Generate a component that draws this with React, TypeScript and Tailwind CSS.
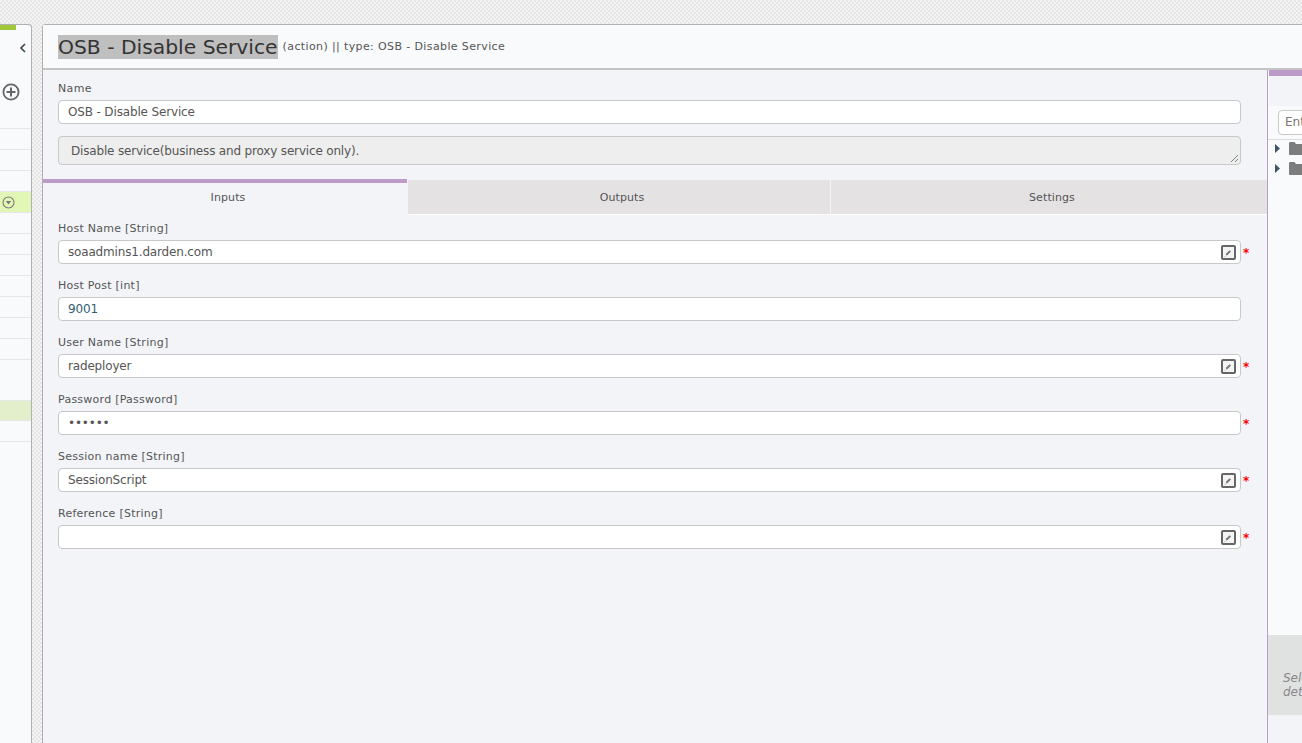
import React from "react";

const sideRows = [
  "h-[21px]",
  "h-[21px]",
  "h-[21px]",
  "h-[21px] bg-[#e2f7b5]",
  "h-[21px]",
  "h-[21px]",
  "h-[21px]",
  "h-[21px]",
  "h-[21px]",
  "h-[21px]",
  "h-[21px]",
  "h-[41px]",
  "h-[20px] bg-[#e3efca]",
  "h-[21px]",
  "h-[21px]",
];

const fields = [
  { label: "Host Name [String]", value: "soaadmins1.darden.com", edit: true, required: true },
  { label: "Host Post [int]", value: "9001", edit: false, required: false, tone: "text-[#2f5d73]" },
  { label: "User Name [String]", value: "radeployer", edit: true, required: true },
  { label: "Password [Password]", value: "••••••", edit: false, required: true },
  { label: "Session name [String]", value: "SessionScript", edit: true, required: true },
  { label: "Reference [String]", value: "", edit: true, required: true },
];

const EditIcon = () => (
  <svg width="15" height="15" viewBox="0 0 15 15" className="absolute right-[5px] top-[5px]">
    <rect x="1" y="1" width="13" height="13" rx="1" fill="#f4f4f4" stroke="#666" strokeWidth="2" />
    <path d="M5.2 8.6 8.6 5.2l1.4 1.4-3.4 3.4-1.8.4z" fill="#777" />
    <path d="M3.5 11.5h1" stroke="#bbb" strokeWidth="1" />
  </svg>
);

const Field = ({ label, value, edit, required, tone }: { label: string; value: string; edit: boolean; required: boolean; tone?: string }) => (
  <div className="mb-[14px]">
    <div className="h-[19px] text-[11px] leading-[16px] tracking-[0.25px] text-[#555]">{label}</div>
    <div className="relative w-[1183px]">
      <div className={`h-[24px] rounded-[4px] border border-[#c8c8c8] bg-white pl-[9px] text-[12px] leading-[23px] tracking-[-0.17px] ${tone ?? "text-[#555]"}`}>
        {value}
      </div>
      {edit && <EditIcon />}
      {required && <span className="absolute left-[1185px] top-[5px] text-[12px] leading-[16px] font-bold text-[#f00]">*</span>}
    </div>
  </div>
);

const Folder = () => (
  <svg width="15" height="15" viewBox="0 0 15 15">
    <path d="M0 2a1 1 0 0 1 1-1h4.5l1.5 2h8v11H1a1 1 0 0 1-1-1z" fill="#7d7d7d" />
  </svg>
);

const Caret = () => (
  <svg width="5" height="9" viewBox="0 0 5 9">
    <path d="M0 0l5 4.5L0 9z" fill="#3f5566" />
  </svg>
);

export default function App() {
  return (
    <div className="h-[743px] w-[1302px] overflow-hidden bg-[repeating-conic-gradient(#e6e6e6_0%_25%,#f3f3f3_0%_50%)] bg-[length:4px_4px] pt-[24px] font-['DejaVu_Sans',sans-serif]">
      <div className="flex h-[719px]">
        {/* collapsed left column */}
        <div className="w-[32px] shrink-0 overflow-hidden rounded-tr-[4px] border-t border-r border-[#b0b0b0] bg-[#f9fafc]">
          <div className="h-[5px] w-[16px] bg-[#a2c73b]" />
          <div className="flex h-[98px] flex-col items-end">
            <svg width="8" height="10" viewBox="0 0 8 10" className="mt-[13px] mr-[4px]">
              <path d="M6 1 2 5l4 4" fill="none" stroke="#3c4a55" strokeWidth="1.7" />
            </svg>
            <svg width="18" height="18" viewBox="0 0 18 18" className="mt-[30px] mr-[11px]">
              <circle cx="9" cy="9" r="7.6" fill="none" stroke="#666" strokeWidth="1.8" />
              <path d="M9 4.5v9M4.5 9h9" stroke="#666" strokeWidth="2" />
            </svg>
          </div>
          {sideRows.map((row, i) => (
            <div key={i} className={`relative border-t border-[#e4e6e8] ${row}`}>
              {i === 3 && (
                <svg width="13" height="13" viewBox="0 0 13 13" className="absolute left-[2px] top-[4px]">
                  <circle cx="6.5" cy="6.5" r="5.5" fill="none" stroke="#777" strokeWidth="1.1" />
                  <path d="M3.8 5h5.4L6.5 8.6z" fill="#777" />
                </svg>
              )}
            </div>
          ))}
        </div>

        {/* main panel */}
        <div className="ml-[10px] flex min-w-0 flex-1 flex-col rounded-tl-[4px] border-t border-l border-[#b0b0b0] bg-[#f2f4f8]">
          <div className="flex h-[45px] shrink-0 items-center border-b-2 border-[#c4c4c4] bg-[#f9fafc] pl-[15px]">
            <span className="mt-[1px] bg-[#bfbfbf] text-[20.3px] leading-[24px] text-[#333]">OSB - Disable Service</span>
            <span className="mt-[1px] ml-[5px] text-[11px] tracking-[0.38px] text-[#555]">(action) || type: OSB - Disable Service</span>
          </div>

          <div className="flex min-h-0 flex-1">
            <div className="w-[1224px] shrink-0">
              <div className="px-[15px] pt-[12px]">
                <div className="h-[18px] text-[11px] leading-[14px] tracking-[0.35px] text-[#555]">Name</div>
                <div className="h-[24px] w-[1183px] rounded-[4px] border border-[#c8c8c8] bg-white pl-[9px] text-[12px] leading-[22px] tracking-[-0.15px] text-[#555]">
                  OSB - Disable Service
                </div>
                <div className="relative mt-[12px] h-[29px] w-[1183px] rounded-[4px] border border-[#c8c8c8] bg-[#eeeeee] pl-[12px] text-[12px] leading-[29px] tracking-[-0.17px] text-[#555]">
                  Disable service(business and proxy service only).
                  <svg width="9" height="9" viewBox="0 0 9 9" className="absolute right-[1px] bottom-[1px]">
                    <path d="M1 8l7-7M5 8l3-3" stroke="#555" strokeWidth="1" strokeDasharray="1 0.5" />
                  </svg>
                </div>
              </div>

              <div className="mt-[14px] flex h-[36px] text-[11px] tracking-[0.1px] text-[#555]">
                <div className="w-[364px] border-t-4 border-[#bc9bc9] pt-[7px] pl-[6px] text-center">Inputs</div>
                <div className="ml-px mt-px h-[35px] w-[422px] border-b border-white bg-[#e4e2e2] pt-[10px] pl-[6px] text-center">Outputs</div>
                <div className="ml-px mt-px h-[35px] w-[436px] border-b border-white bg-[#e4e2e2] pt-[10px] pl-[6px] text-center">Settings</div>
              </div>

              <div className="px-[15px] pt-[6px]">
                {fields.map((f) => (
                  <Field key={f.label} {...f} />
                ))}
              </div>
            </div>

            {/* right column, runs past the window edge */}
            <div className="flex w-[260px] shrink-0 flex-col border-l border-[#b89fc6] bg-[#f9fafc]">
              <div className="ml-px h-[36px] border-t-[6px] border-[#bc9bc9] bg-[#f2f4f8]" />
              <div className="border-b border-[#dcdcdc] px-[10px] pt-[4px] pb-[4px]">
                <div className="h-[25px] rounded-[4px] border border-[#c8c8c8] bg-white pl-[6px] text-[12px] leading-[22px] text-[#777]">Enter search</div>
              </div>
              <div className="flex h-[20px] items-center pb-[4px] pl-[7px]">
                <Caret />
                <span className="ml-[9px] flex"><Folder /></span>
              </div>
              <div className="flex h-[20px] items-center pb-[4px] pl-[7px]">
                <Caret />
                <span className="ml-[9px] flex"><Folder /></span>
              </div>
              <div className="mt-[455px] h-[80px] bg-[#e0e2e2] pl-[15px] pt-[36px] text-[12px] leading-[14px] text-[#888] italic">
                Select a node to see
                <br />
                details
              </div>
              <div className="flex-1 bg-[#f2f4f8]" />
            </div>
          </div>
        </div>
      </div>
    </div>
  );
}
